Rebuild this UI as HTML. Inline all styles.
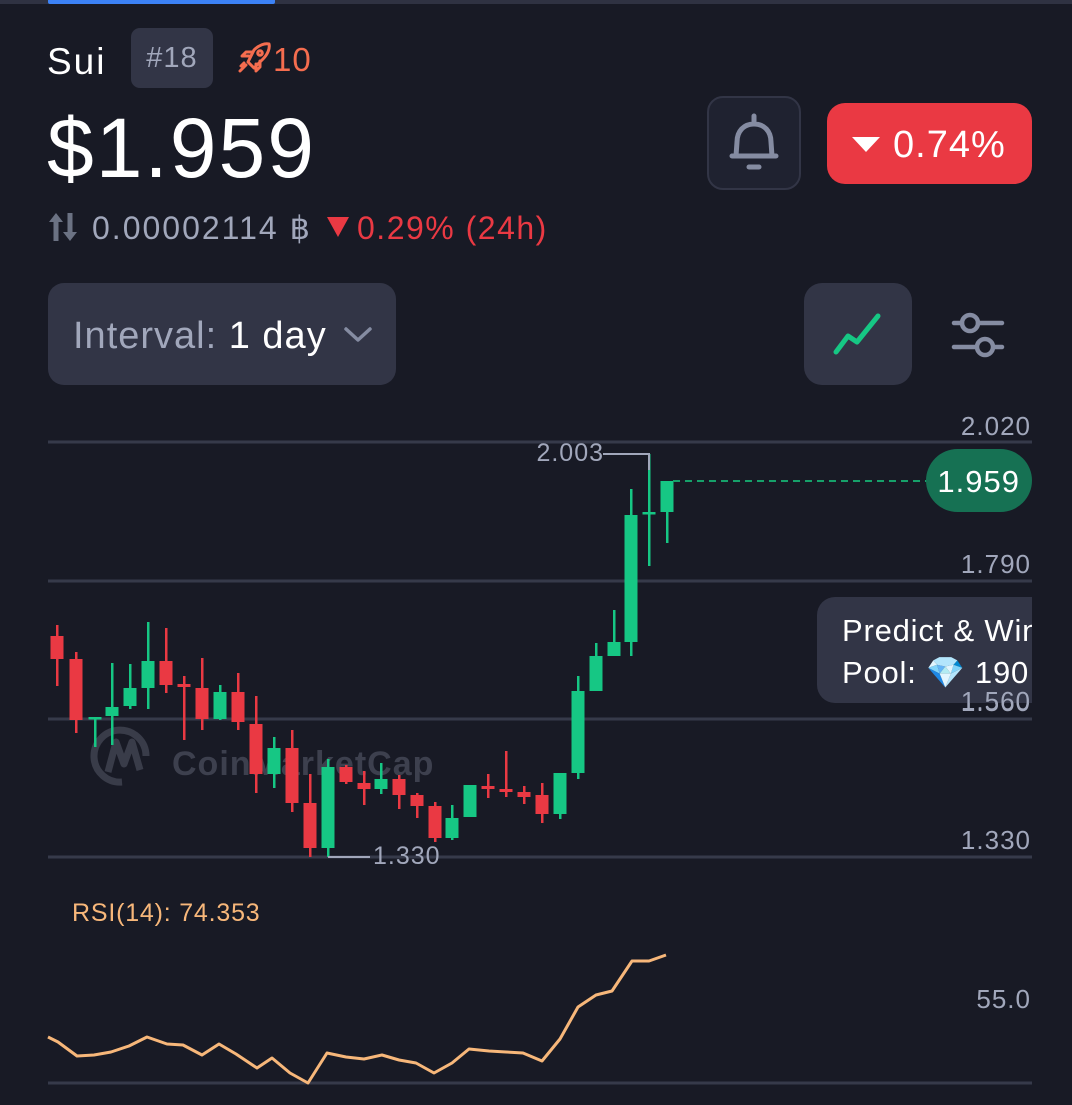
<!DOCTYPE html>
<html><head><meta charset="utf-8">
<style>
html,body{margin:0;padding:0;}
body{width:1072px;height:1105px;background:#181a25;position:relative;overflow:hidden;font-family:"Liberation Sans",sans-serif;}
.a{position:absolute;white-space:nowrap;}
</style></head><body>
<div class="a" style="left:0;top:0;width:1072px;height:4px;background:#2f3242"></div>
<div class="a" style="left:48px;top:0;width:227px;height:4px;background:#3c82f6;border-radius:0 0 2px 2px"></div>

<div class="a" style="left:47px;top:40px;font-size:37px;color:#fff;line-height:44px;letter-spacing:2px">Sui</div>
<div class="a" style="left:131px;top:28px;width:82px;height:60px;background:#323546;border-radius:9px;color:#a1a7bb;font-size:29px;line-height:60px;text-align:center;letter-spacing:1px">#18</div>
<svg class="a" style="left:238px;top:42px" width="34" height="32" viewBox="0 0 34 32" fill="none" stroke="#f56d4f" stroke-width="3" stroke-linecap="round" stroke-linejoin="round">
<path d="M10 20 L16 26 L25 17 C30 12 32 6 31 2 C27 1 21 3 16 8 Z"/><circle cx="22" cy="11" r="2.3"/><path d="M11 14 L4 14 L8 10 L14 10 M18 22 L18 29 L22 25 L22 19"/><path d="M8 23 L2 29 M6 21 L3 24"/></svg>
<div class="a" style="left:273px;top:40px;font-size:33px;color:#f56d4f;line-height:40px;letter-spacing:1px">10</div>

<div class="a" style="left:47px;top:100px;font-size:84px;color:#fff;line-height:96px;letter-spacing:2px">$1.959</div>

<svg class="a" style="left:48px;top:213px" width="32" height="28" viewBox="0 0 32 28" fill="#6b7283"><path d="M8 0 L15 9 L10.5 9 L10.5 28 L5.5 28 L5.5 9 L1 9 Z"/><path d="M22 28 L15 19 L19.5 19 L19.5 0 L24.5 0 L24.5 19 L29 19 Z"/></svg>
<div class="a" style="left:92px;top:208px;font-size:32px;color:#a1a7bb;line-height:40px;letter-spacing:2px">0.00002114 ฿</div>
<div class="a" style="left:327px;top:217px;width:0;height:0;border-left:11px solid transparent;border-right:11px solid transparent;border-top:20px solid #ea3943"></div>
<div class="a" style="left:357px;top:208px;font-size:32px;color:#ea3943;line-height:40px;letter-spacing:1.5px">0.29% (24h)</div>

<div class="a" style="left:707px;top:96px;width:94px;height:94px;box-sizing:border-box;border:2px solid #323546;background:#1f2230;border-radius:16px"></div>
<svg class="a" style="left:724px;top:112px" width="60" height="64" viewBox="0 0 60 64" fill="none" stroke="#858ca2" stroke-width="5" stroke-linecap="round" stroke-linejoin="round"><path d="M30 4 L30 10 M8 44 L52 44 M12 44 L13 30 C13 19 20 12 30 12 C40 12 47 19 47 30 L48 44"/><path d="M25 55 L35 55"/></svg>
<div class="a" style="left:827px;top:103px;width:205px;height:81px;background:#ea3943;border-radius:18px"></div>
<div class="a" style="left:852px;top:137px;width:0;height:0;border-left:14px solid transparent;border-right:14px solid transparent;border-top:15px solid #fff"></div>
<div class="a" style="left:893px;top:123px;font-size:38px;color:#fff;line-height:44px;letter-spacing:1px">0.74%</div>

<div class="a" style="left:48px;top:283px;width:348px;height:102px;background:#323546;border-radius:16px"></div>
<div class="a" style="left:73px;top:313px;font-size:38px;line-height:46px;color:#a1a7bb;letter-spacing:1px">Interval: <span style="color:#fff">1 day</span></div>
<svg class="a" style="left:343px;top:325px" width="30" height="20" viewBox="0 0 30 20" fill="none" stroke="#858ca2" stroke-width="3.5" stroke-linecap="round" stroke-linejoin="round"><path d="M3 4 L15 15 L27 4"/></svg>

<div class="a" style="left:804px;top:283px;width:108px;height:102px;background:#323546;border-radius:18px"></div>
<svg class="a" style="left:830px;top:310px" width="56" height="50" viewBox="0 0 56 50" fill="none" stroke="#16c784" stroke-width="5" stroke-linecap="round" stroke-linejoin="round"><path d="M6 42 L18 26 L27 32 L48 6"/></svg>
<svg class="a" style="left:950px;top:310px" width="56" height="48" viewBox="0 0 56 48" fill="none" stroke="#858ca2" stroke-width="4.5" stroke-linecap="round"><path d="M4 13 L12 13 M28 13 L52 13 M4 37 L26 37 M44 37 L52 37"/><circle cx="20" cy="13" r="8"/><circle cx="35" cy="37" r="8"/></svg>

<svg class="a" style="left:0;top:0" width="1072" height="1105">
<g stroke="#363a4a" stroke-width="3">
<line x1="48" y1="442" x2="1032" y2="442"/><line x1="48" y1="581" x2="1032" y2="581"/><line x1="48" y1="719" x2="1032" y2="719"/><line x1="48" y1="857" x2="1032" y2="857"/><line x1="48" y1="1083" x2="1032" y2="1083"/>
</g>
<g font-family="Liberation Sans" font-size="26" fill="#a1a7bb" text-anchor="end" letter-spacing="1">
<text x="1031" y="435">2.020</text><text x="1031" y="573">1.790</text><text x="1031" y="711">1.560</text><text x="1031" y="849">1.330</text><text x="1031" y="1008">55.0</text>
</g>
<g opacity="0.5" fill="none" stroke="#5a5e6e" stroke-width="7">
<path d="M146 756 A26 26 0 1 0 122 782"/><path d="M108 772 L116 742 L124 764 L132 742 L140 770" stroke-linejoin="round"/>
</g>
<text x="172" y="775" font-family="Liberation Sans" font-size="34" font-weight="bold" fill="#4a4d5c" opacity="0.75" letter-spacing="1">CoinMarketCap</text>

<g id="c"></g>
<line x1="673" y1="481" x2="928" y2="481" stroke="#16a06a" stroke-width="2" stroke-dasharray="7 5"/>
<path d="M603 454 L649 454 L649 470" stroke="#a1a7bb" stroke-width="2" fill="none"/>
<text x="604" y="461" font-family="Liberation Sans" font-size="25" fill="#a1a7bb" text-anchor="end" letter-spacing="1">2.003</text>
<path d="M328 857 L370 857" stroke="#a1a7bb" stroke-width="2"/>
<text x="373" y="864" font-family="Liberation Sans" font-size="25" fill="#a1a7bb" letter-spacing="1">1.330</text>
<rect x="926" y="449" width="106" height="63" rx="31.5" fill="#167153"/>
<text x="1020" y="492" font-family="Liberation Sans" font-size="31" fill="#fff" text-anchor="end" letter-spacing="1">1.959</text>
<text x="72" y="921" font-family="Liberation Sans" font-size="25" fill="#f7b77a" letter-spacing="0.8">RSI(14): 74.353</text>
<polyline fill="none" stroke="#f7b77a" stroke-width="3" stroke-linejoin="round" points="48,1037 58,1042 77,1056 94,1055 111,1052 129,1046 147,1037 167,1044 183,1045 202,1055 219,1044 236,1054 257,1068 272,1058 290,1073 308,1083 327,1053 346,1057 364,1059 382,1055 399,1060 416,1063 434,1073 452,1063 469,1049 489,1051 506,1052 523,1053 542,1061 560,1039 578,1007 596,995 612,991 632,961 649,961 666,955"/>
</svg>

<div class="a" style="left:817px;top:597px;width:240px;height:106px;background:#323546;border-radius:18px"></div>
<div class="a" style="left:842px;top:610px;font-size:31px;line-height:42px;color:#fff;letter-spacing:0.8px">Predict &amp; Win<br>Pool: <span style="font-family:'DejaVu Sans',sans-serif;color:#7fd0f5">💎</span> 190</div>
<div class="a" style="left:1032px;top:590px;width:40px;height:120px;background:#181a25"></div>
<div class="a" style="left:950px;top:686px;font-size:26px;color:#a1a7bb;line-height:30px;width:81px;text-align:right;letter-spacing:1px">1.560</div>

<script>
var d=[["r",57,636,659,625,686],["r",76,659,720,652,733],["g",95,717,719,717,747],["g",112,707,716,663,745],["g",130,688,706,664,709],["g",148,661,688,622,709],["r",166,661,685,628,693],["r",184,684,687,676,740],["r",202,688,719,658,730],["g",220,692,719,685,720],["r",238,692,722,673,730],["r",256,724,774,696,793],["g",274,748,774,737,788],["r",292,748,803,730,812],["r",310,803,848,774,857],["g",328,767,848,759,857],["r",346,767,782,765,784],["r",364,783,789,771,805],["g",381,779,789,763,794],["r",399,779,795,775,809],["r",417,795,806,793,818],["r",435,806,838,802,842],["g",452,818,838,805,840],["g",470,785,817,785,817],["r",488,786,789,774,798],["r",506,789,792,751,797],["r",524,792,797,786,804],["r",542,795,814,783,823],["g",560,773,814,773,819],["g",578,691,773,676,779],["g",596,656,691,643,691],["g",614,642,656,610,656],["g",631,515,642,489,656],["g",649,512,514,454,566],["g",667,481,512,481,543]];
var s="";d.forEach(function(c){var col=c[0]=="r"?"#ea3943":"#16c784";s+='<rect x="'+(c[1]-1)+'" y="'+c[4]+'" width="2.5" height="'+(c[5]-c[4])+'" fill="'+col+'"/><rect x="'+(c[1]-6.5)+'" y="'+c[2]+'" width="13" height="'+Math.max(2.5,c[3]-c[2])+'" fill="'+col+'"/>';});
document.getElementById("c").innerHTML=s;
</script>
</body></html>
